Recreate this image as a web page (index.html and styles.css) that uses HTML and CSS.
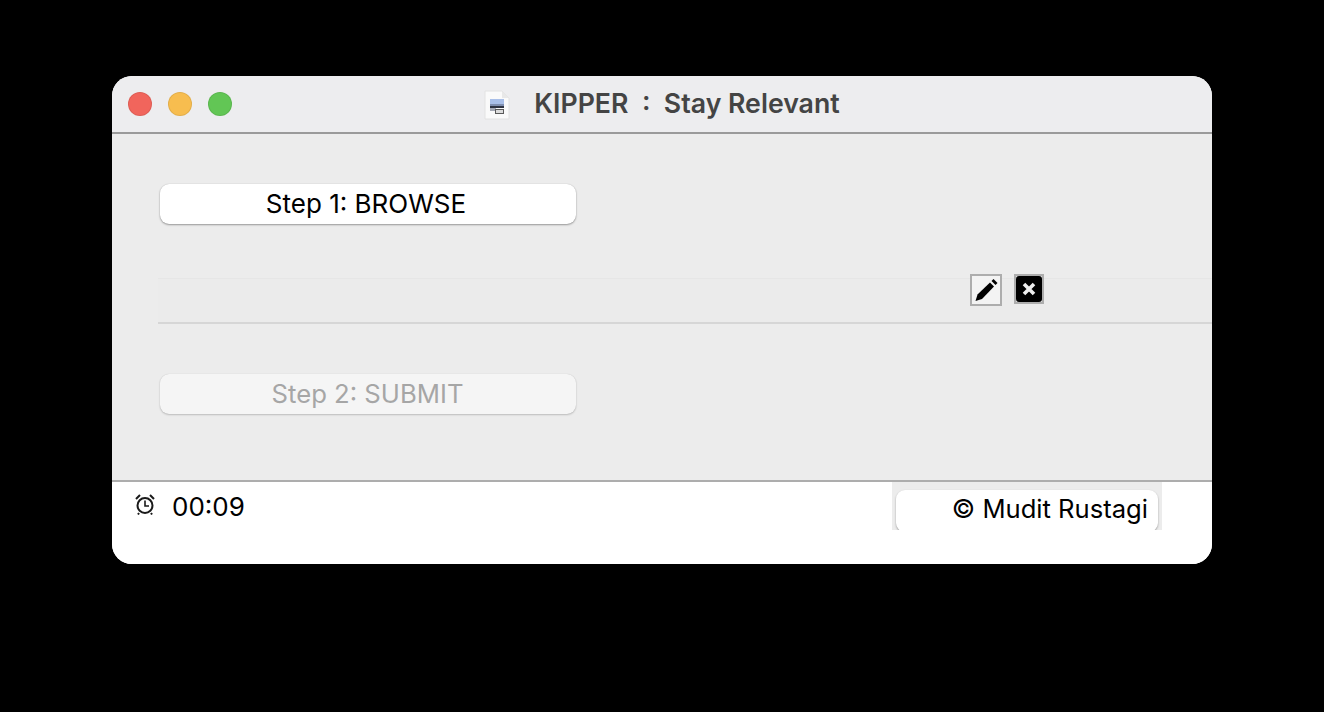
FILE: index.html
```html
<!DOCTYPE html>
<html lang="en">
<head>
    <meta charset="UTF-8">
    <meta name="viewport" content="width=device-width, initial-scale=1.0">
    <title>KIPPER : Stay Relevant</title>
    <link rel="stylesheet" href="styles.css">
</head>
<body>
    <div class="window">
        <div class="titlebar">
            <div class="lights">
                <span class="light red"></span>
                <span class="light yellow"></span>
                <span class="light green"></span>
            </div>
            <div class="title">
                <svg class="doc-icon" width="26" height="30" viewBox="0 0 26 30">
                    <path d="M1 1h17l7 7v21H1z" fill="#fafafa" stroke="#e2e2e2" stroke-width="1"/>
                    <path d="M18 1v7h7z" fill="#e8e8e8"/>
                    <rect x="6" y="9" width="14" height="5" fill="#a9bfe8"/>
                    <rect x="6" y="14" width="14" height="2" fill="#7f8fb0"/>
                    <rect x="6" y="16" width="14" height="2" fill="#2f3442"/>
                    <rect x="6" y="18" width="6" height="3" fill="#a5a9b5"/>
                    <rect x="11.5" y="19.5" width="8" height="4" fill="#dcdcdc" stroke="#5a5a5a" stroke-width="1"/>
                </svg>
                <span class="title-text">KIPPER&nbsp; :&nbsp; Stay Relevant</span>
            </div>
        </div>

        <div class="main">
            <button class="step-btn" type="button">Step 1: BROWSE</button>
            <div class="entry">
                <div class="tool-btn pencil">
                    <svg width="28" height="28" viewBox="0 0 28 28">
                        <path d="M3.5 25l2-6.5L18 6.500l4 4L10 23z" fill="#000"/>
                        <path d="M19.500 5l2-2 4 4-2 2z" fill="#000"/>
                    </svg>
                </div>
                <div class="tool-btn close">
                    <svg width="26" height="26" viewBox="0 0 26 26">
                        <rect width="26" height="26" rx="3" fill="#000"/>
                        <path d="M8 8l10 10M18 8L8 18" stroke="#eee" stroke-width="3.600"/>
                    </svg>
                </div>
            </div>
            <button class="step-btn disabled" type="button" disabled>Step 2: SUBMIT</button>
        </div>

        <div class="footer">
            <div class="timer">
                <svg class="alarm" width="22" height="22" viewBox="0 0 22 22" fill="none" stroke="#1a1a1a">
                    <circle cx="11" cy="12.500" r="7.500" stroke-width="2"/>
                    <path d="M11 7.500v5.500h4" stroke-width="1.600"/>
                    <path d="M2 6l4-4M20 6l-4-4M5 20l-1 1.500M17 20l1 1.500" stroke-width="2"/>
                </svg>
                <span class="time">00:09</span>
            </div>
            <div class="credit-wrap">
                <div class="credit">© Mudit Rustagi</div>
            </div>
        </div>
    </div>
</body>
</html>
```

FILE: styles.css
```css
html, body {
    height: 100%;
}
body {
    margin: 0;
    background-color: #000;
    font-family: Inter, "Noto Sans", sans-serif;
    overflow: hidden;
}
.window {
    width: 1100px;
    height: 488px;
    margin: 76px 0 0 112px;
    border-radius: 20px;
    overflow: hidden;
    background-color: #fff;
    display: flex;
    flex-direction: column;
}
.titlebar {
    height: 56px;
    flex: none;
    background-color: #edEDEF;
    border-bottom: 2px solid #9a9a9a;
    position: relative;
    display: flex;
    align-items: center;
    justify-content: center;
}
.lights {
    position: absolute;
    left: 16px;
    top: 16px;
    display: flex;
    gap: 16px;
}
.light {
    width: 24px;
    height: 24px;
    border-radius: 50%;
    box-sizing: border-box;
    border: 1px solid rgba(0, 0, 0, 0.08);
}
.red { background-color: #f1655c; }
.yellow { background-color: #f7bd4f; }
.green { background-color: #62c655; }
.title {
    display: flex;
    align-items: center;
    gap: 24px;
}
.doc-icon {
    margin-top: 2px;
}
.title-text {
    font-size: 26.7px;
    font-weight: 600;
    color: #444;
    padding-bottom: 2px;
}
.main {
    height: 346px;
    flex: none;
    background-color: #ececec;
    padding: 50px 0 0 46px;
    box-sizing: border-box;
    display: flex;
    flex-direction: column;
    align-items: flex-start;
}
.step-btn {
    width: 416px;
    height: 40px;
    margin-left: 2px;
    background-color: #fff;
    border: none;
    border-radius: 9px;
    box-shadow: 0 1px 2px rgba(0, 0, 0, 0.35), 0 0 1px rgba(0, 0, 0, 0.2);
    font-family: inherit;
    font-size: 26px;
    color: #000;
    padding: 0 4px 2px 0;
}
.step-btn.disabled {
    background-color: #f5f5f5;
    color: #a6a6a6;
    box-shadow: 0 1px 2px rgba(0, 0, 0, 0.2), 0 0 1px rgba(0, 0, 0, 0.15);
    font-size: 25.7px;
    padding: 0 1px 2px 0;
}
.entry {
    width: 100%;
    height: 46px;
    margin: 54px 0 50px;
    box-sizing: border-box;
    background-color: #ebebeb;
    border-top: 1px solid #e6e6e6;
    border-bottom: 2px solid #d6d6d6;
    position: relative;
}
.tool-btn {
    position: absolute;
    top: -5px;
    box-sizing: border-box;
    border: 2px solid #adadad;
    display: flex;
    align-items: center;
    justify-content: center;
}
.pencil {
    left: 812px;
    width: 32px;
    height: 32px;
    background-color: #f3f3f3;
}
.close {
    left: 856px;
    width: 30px;
    height: 30px;
    background-color: #ececec;
}
.footer {
    flex: 1;
    background-color: #fff;
    border-top: 2px solid #adadad;
    display: flex;
    align-items: flex-start;
    justify-content: space-between;
}
.timer {
    display: flex;
    align-items: center;
    gap: 16px;
    margin: 9px 0 0 22px;
    font-size: 26px;
    color: #000;
}
.alarm {
    margin-bottom: 6px;
}
.credit-wrap {
    width: 270px;
    height: 48px;
    margin-right: 50px;
    background-color: #ececec;
    padding: 8px 4px 0;
    box-sizing: border-box;
    overflow: hidden;
}
.credit {
    height: 42px;
    background-color: #fff;
    border-radius: 9px;
    box-shadow: 0 1px 2px rgba(0, 0, 0, 0.35);
    font-size: 25.6px;
    line-height: 38px;
    text-align: right;
    padding-right: 10px;
}
```
